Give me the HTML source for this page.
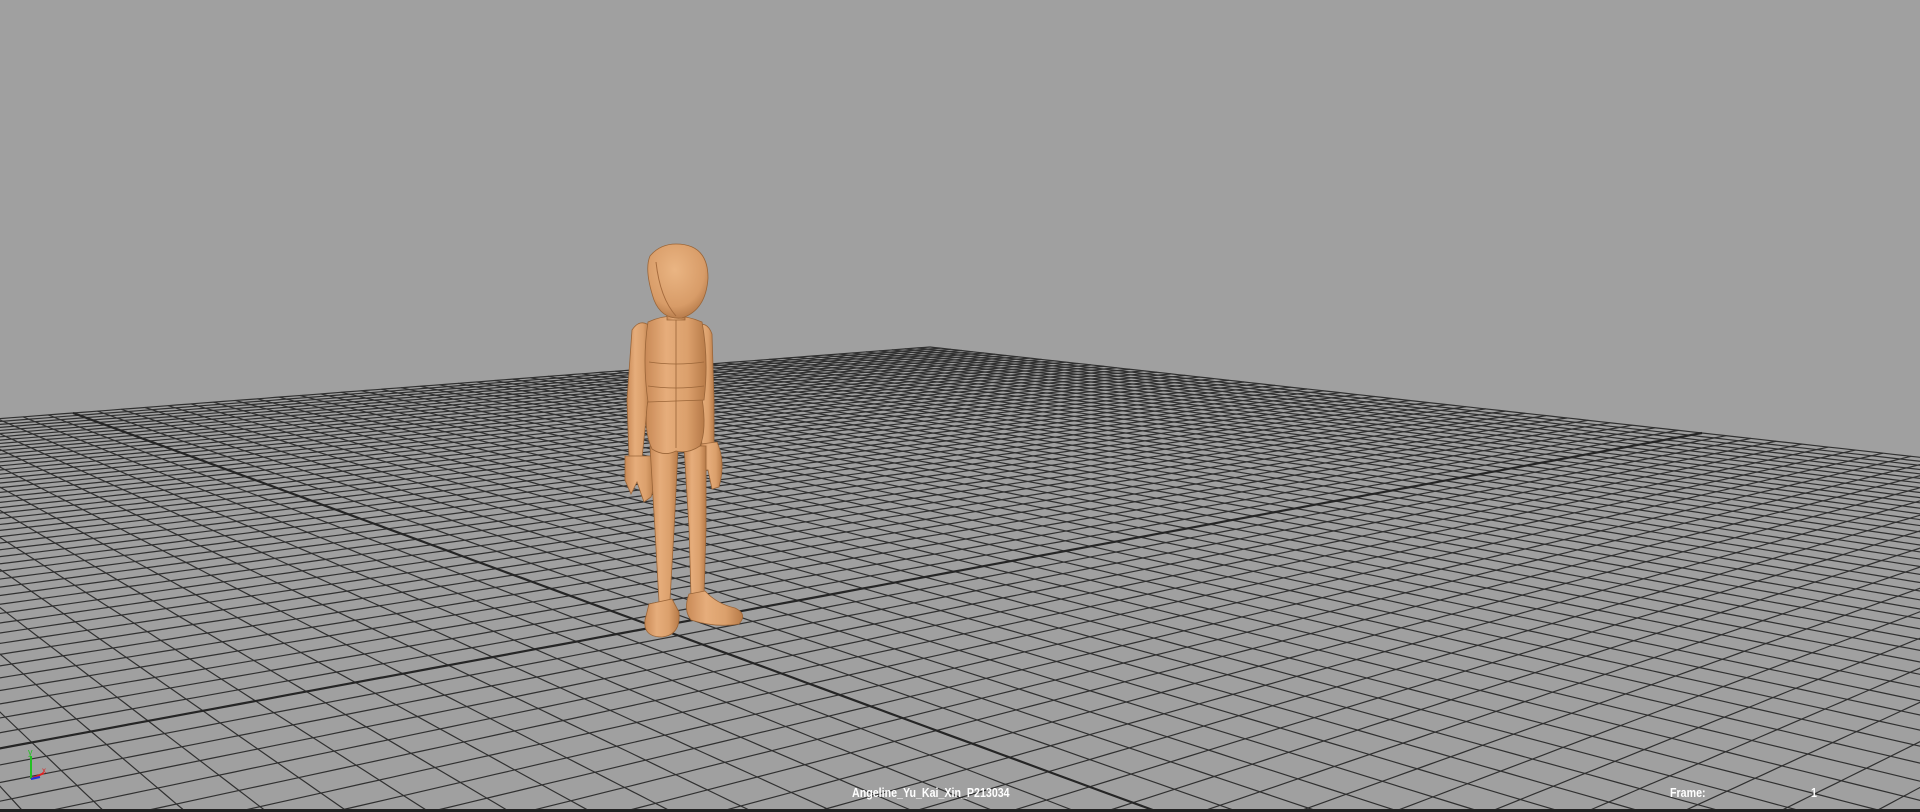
<!DOCTYPE html>
<html><head><meta charset="utf-8">
<style>
html,body{margin:0;padding:0;background:#a0a0a0;overflow:hidden;width:1920px;height:812px}
#wrap{position:relative;width:1920px;height:812px;background:#a0a0a0;overflow:hidden}
svg{position:absolute;left:0;top:0}
.t{position:absolute;font-family:"Liberation Sans",sans-serif;font-size:13px;font-weight:bold;color:#fff;top:786px;line-height:14px;transform:scaleX(0.82);transform-origin:left top;white-space:nowrap}
</style></head><body>
<div id="wrap">
<svg id="grid" width="1920" height="812" viewBox="0 0 1920 812"></svg>
<svg width="1920" height="812" viewBox="0 0 1920 812">
<defs>
<linearGradient id="sk" x1="0" y1="0" x2="1" y2="0">
<stop offset="0" stop-color="#c98a57"/><stop offset="0.35" stop-color="#e6ad7b"/><stop offset="0.7" stop-color="#dba06c"/><stop offset="1" stop-color="#b77a48"/>
</linearGradient>
<radialGradient id="hd" cx="0.45" cy="0.35" r="0.7">
<stop offset="0" stop-color="#eab583"/><stop offset="0.7" stop-color="#d89c68"/><stop offset="1" stop-color="#b07545"/>
</radialGradient>
</defs>
<g stroke="#9a6538" stroke-width="0.8" fill="url(#sk)">
<path d="M632 330 Q640 318 650 326 L648 400 L642 458 L629 458 L627 400 Z"/>
<path d="M625 456 L653 456 Q658 478 651 497 L644 502 L637 482 L631 494 L625 480 Z"/>
<path d="M695 326 Q707 320 712 334 L714 400 L714 446 L702 446 L699 400 Z"/>
<path d="M701 444 L717 442 Q726 462 719 487 L712 489 L708 470 L703 470 Z"/>
<path d="M650 446 L678 448 L674 530 L670 600 L659 602 L655 530 Z"/>
<path d="M684 446 L706 446 L706 528 L704 596 L691 596 L689 528 Z"/>
<path d="M649 604 L672 599 L679 612 Q681 635 662 637 Q643 637 645 620 Z"/>
<path d="M689 594 L705 591 Q717 604 735 608 Q748 614 739 624 Q716 628 691 620 Q683 610 689 594 Z"/>
<path d="M648 400 L702 398 Q707 430 700 446 Q688 454 676 451 Q664 457 652 449 Q643 430 648 400 Z"/>
<path d="M648 322 Q674 310 702 322 Q709 360 704 400 L648 402 Q642 360 648 322 Z"/>
<path d="M676 316 L676 448" fill="none"/>
<path d="M649 362 Q676 366 704 362" fill="none"/>
<path d="M648 386 Q676 390 704 386" fill="none"/>
<path d="M667 306 L685 306 L685 320 L667 320 Z"/>
</g>
<path d="M676 244 Q708 244 708 278 Q706 310 682 318 Q662 320 654 300 Q644 270 650 256 Q660 244 676 244 Z" fill="url(#hd)" stroke="#9a6538" stroke-width="0.8"/>
<path d="M656 262 Q660 298 676 316" fill="none" stroke="#a66c3e" stroke-width="1"/>
<g stroke-width="2" fill="none">
<line x1="31" y1="779" x2="31" y2="756" stroke="#22c022"/>
<line x1="31" y1="779" x2="44" y2="773" stroke="#e02020"/>
<line x1="31" y1="779" x2="40" y2="777" stroke="#2030e0"/>
</g>
<text x="28" y="755" font-family="Liberation Sans" font-size="9" fill="#22c022">y</text>
<text x="42" y="773" font-family="Liberation Sans" font-size="8" fill="#e02020">x</text>
<rect x="0" y="809" width="1920" height="3" fill="#222"/>
</svg>
<div class="t" style="left:852px">Angeline_Yu_Kai_Xin_P213034</div>
<div class="t" style="left:1670px">Frame:</div>
<div class="t" style="left:1811px">1</div>
</div>
<script>
(function(){
function solve(A,b){var n=b.length;for(var i=0;i<n;i++){var m=i;for(var k=i+1;k<n;k++)if(Math.abs(A[k][i])>Math.abs(A[m][i]))m=k;var t=A[i];A[i]=A[m];A[m]=t;t=b[i];b[i]=b[m];b[m]=t;for(var k=i+1;k<n;k++){var f=A[k][i]/A[i][i];for(var j=i;j<n;j++)A[k][j]-=f*A[i][j];b[k]-=f*b[i];}}var x=new Array(n);for(var i=n-1;i>=0;i--){var s=b[i];for(var j=i+1;j<n;j++)s-=A[i][j]*x[j];x[i]=s/A[i][i];}return x;}
var src=[[0,0],[-1,-1],[-1,0],[0,-1]];
var dst=[[655,627],[930,347],[73,413],[1702,433]];
var A=[],b=[];
for(var i=0;i<4;i++){var u=src[i][0],v=src[i][1],X=dst[i][0],Y=dst[i][1];
A.push([u,v,1,0,0,0,-u*X,-v*X]);b.push(X);
A.push([0,0,0,u,v,1,-u*Y,-v*Y]);b.push(Y);}
var h=solve(A,b);
function P(u,v){var w=h[6]*u+h[7]*v+1;return [(h[0]*u+h[1]*v+h[2])/w,(h[3]*u+h[4]*v+h[5])/w,w];}
var p0=P(0,0),pu=P(0.01,0),pv=P(0,0.01);
var d=(Math.hypot(pu[0]-p0[0],pu[1]-p0[1])+Math.hypot(pv[0]-p0[0],pv[1]-p0[1]))/2*100;
var N=Math.max(10,Math.round(d/32));
var out=[],thick=[];
function line(fn,isThick){
  var pts=[],segs=[];
  for(var s=0;s<=200;s++){var t=-1+2*s/200;var q=fn(t);
    if(q[2]>0.08&&Math.abs(q[0])<6000&&Math.abs(q[1])<6000){pts.push(q[0].toFixed(1)+','+q[1].toFixed(1));}
    else{if(pts.length>1)segs.push(pts.join(' '));pts=[];}}
  if(pts.length>1)segs.push(pts.join(' '));
  segs.forEach(function(sg){(isThick?thick:out).push('<polyline points="'+sg+'"/>');});
}
for(var i=-N;i<=N;i++){var c=i/N;
  line(function(t){return P(c,t);},i===0);
  line(function(t){return P(t,c);},i===0);}
var svg=document.getElementById('grid');
svg.innerHTML='<g fill="none" stroke="#303030" stroke-width="1.2">'+out.join('')+'</g><g fill="none" stroke="#252525" stroke-width="2.2">'+thick.join('')+'</g>';
})();
</script>
</body></html>
